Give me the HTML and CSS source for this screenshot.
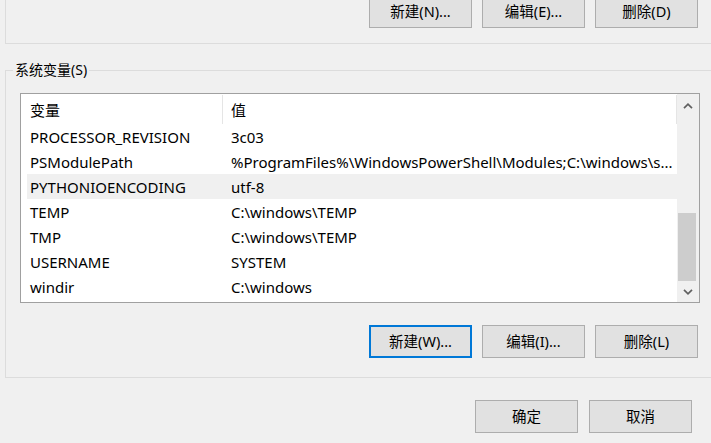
FILE: index.html
```html
<!DOCTYPE html>
<html lang="zh-CN">
<head>
<meta charset="utf-8">
<title>环境变量</title>
<link rel="stylesheet" href="styles.css">
</head>
<body>
<div class="page">
  <div class="group top-group">
    <div class="btn-row">
      <button class="btn">新建(N)...</button>
      <button class="btn">编辑(E)...</button>
      <button class="btn">删除(D)</button>
    </div>
  </div>

  <fieldset class="group sys-group">
    <legend class="legend">系统变量(S)</legend>
    <div class="list">
      <div class="list-body">
        <div class="header">
          <div class="hcell hcell-name">变量</div>
          <div class="hcell hcell-value">值</div>
        </div>
        <div class="row"><div class="cell name">PROCESSOR_REVISION</div><div class="cell value">3c03</div></div>
        <div class="row"><div class="cell name">PSModulePath</div><div class="cell value">%ProgramFiles%\WindowsPowerShell\Modules;C:\windows\s...</div></div>
        <div class="row row-hover"><div class="cell name">PYTHONIOENCODING</div><div class="cell value">utf-8</div></div>
        <div class="row"><div class="cell name">TEMP</div><div class="cell value">C:\windows\TEMP</div></div>
        <div class="row"><div class="cell name">TMP</div><div class="cell value">C:\windows\TEMP</div></div>
        <div class="row"><div class="cell name">USERNAME</div><div class="cell value">SYSTEM</div></div>
        <div class="row"><div class="cell name">windir</div><div class="cell value">C:\windows</div></div>
      </div>
      <div class="scrollbar">
        <div class="sb-arrow sb-up">
          <svg width="10" height="6" viewBox="0 0 10 6"><polyline points="1,5.2 5,1.2 9,5.2" fill="none" stroke="#606060" stroke-width="1.7"/></svg>
        </div>
        <div class="sb-track"><div class="sb-thumb"></div></div>
        <div class="sb-arrow sb-down">
          <svg width="10" height="6" viewBox="0 0 10 6"><polyline points="1,0.8 5,4.8 9,0.8" fill="none" stroke="#606060" stroke-width="1.7"/></svg>
        </div>
      </div>
    </div>
    <div class="btn-row btn-row-sys">
      <button class="btn btn-default">新建(W)...</button>
      <button class="btn">编辑(I)...</button>
      <button class="btn">删除(L)</button>
    </div>
  </fieldset>

  <div class="dialog-btns">
    <button class="btn">确定</button>
    <button class="btn">取消</button>
  </div>
</div>
</body>
</html>
```

FILE: styles.css
```css
html, body {
  margin: 0;
  padding: 0;
  background: #f0f0f0;
  overflow: hidden;
}

body {
  width: 711px;
  height: 443px;
  font-family: "Noto Sans", "Noto Sans CJK SC", sans-serif;
  font-size: 14px;
  color: #000;
}

.page {
  width: 740px;
}

.group {
  box-sizing: border-box;
  width: 725px;
  margin: 0 0 0 5px;
  border: 1px solid #dcdcdc;
}

.top-group {
  border-top: none;
  height: 49px;
}

.btn-row {
  display: flex;
  gap: 10px;
  padding-left: 363px;
}

.top-group .btn-row {
  margin-top: -5px;
}

.btn {
  box-sizing: border-box;
  width: 103px;
  height: 33px;
  padding: 0;
  margin: 0;
  background: #e1e1e1;
  border: 1px solid #adadad;
  font-family: inherit;
  font-size: 14.5px;
  color: #000;
  line-height: 1;
  display: flex;
  align-items: center;
  justify-content: center;
}

.btn-default {
  border: 2px solid #0078d7;
}

.sys-group {
  margin-top: 16px;
  padding: 0 0 19px 0;
  min-width: 0;
}

.legend {
  margin-left: 7px;
  padding: 0 2px;
  line-height: 20px;
  height: 20px;
}

.list {
  box-sizing: border-box;
  display: flex;
  width: 680px;
  height: 210px;
  margin: 13px 0 0 14px;
  border: 1px solid #a0a0a0;
  background: #fff;
  font-size: 15px;
}

.list-body {
  width: 656px;
  overflow: hidden;
}

.header {
  display: flex;
  height: 30px;
  margin-left: 6px;
  width: 650px;
}

.hcell {
  box-sizing: border-box;
  display: flex;
  align-items: center;
  height: 29px;
  margin-top: 1px;
  border-right: 1px solid #e5e5e5;
}

.hcell-name {
  width: 196px;
  padding-left: 3px;
}

.hcell-value {
  width: 454px;
  padding-left: 8px;
}

.row {
  display: flex;
  height: 25px;
  margin-left: 6px;
  width: 650px;
}

.row-hover {
  background: #f0f0f0;
}

.cell {
  box-sizing: border-box;
  display: flex;
  align-items: center;
  white-space: nowrap;
  overflow: hidden;
}

.name {
  width: 196px;
  padding-left: 3px;
}

.value {
  width: 454px;
  padding-left: 8px;
}

.scrollbar {
  width: 22px;
  background: #f0f0f0;
  display: flex;
  flex-direction: column;
}

.sb-arrow {
  display: flex;
  align-items: center;
  justify-content: center;
}

.sb-up {
  height: 24px;
}

.sb-down {
  height: 21px;
}

.sb-track {
  flex: 1;
}

.sb-thumb {
  width: 18px;
  height: 68px;
  margin: 95px 0 0 1px;
  background: #cdcdcd;
}

.btn-row-sys {
  margin-top: 22px;
}

.dialog-btns {
  display: flex;
  gap: 11px;
  padding-left: 475px;
  margin-top: 22px;
}
```
